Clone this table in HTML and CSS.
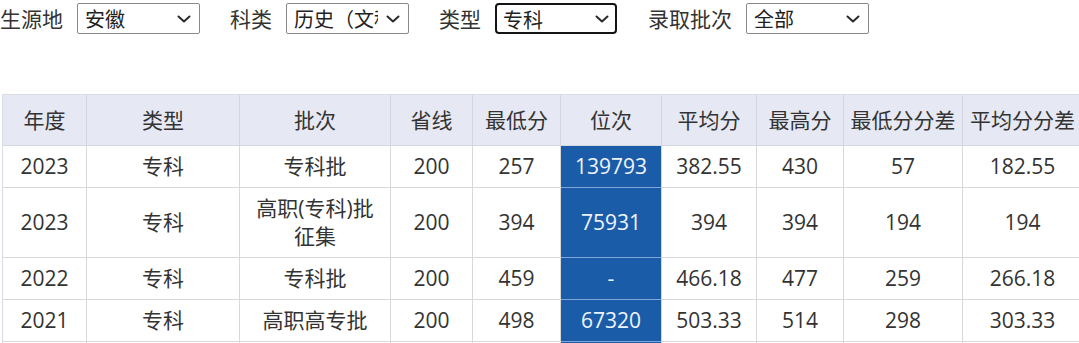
FILE: index.html
```html
<!DOCTYPE html>
<html lang="zh-CN">
<head>
<meta charset="utf-8">
<title>录取分数</title>
<link rel="stylesheet" href="styles.css">
</head>
<body>
<div class="page">
  <div class="filters">
    <div class="field">
      <span class="label">生源地</span>
      <div class="select-wrap">
        <select class="select"><option>安徽</option></select>
        <svg class="chev" width="14" height="8" viewBox="0 0 14 8"><path d="M1.5 1.5 L7 6.5 L12.5 1.5" fill="none" stroke="#2a2a2a" stroke-width="2" stroke-linecap="round" stroke-linejoin="round"/></svg>
      </div>
    </div>
    <div class="field">
      <span class="label">科类</span>
      <div class="select-wrap">
        <select class="select"><option>历史（文科）</option></select>
        <svg class="chev" width="14" height="8" viewBox="0 0 14 8"><path d="M1.5 1.5 L7 6.5 L12.5 1.5" fill="none" stroke="#2a2a2a" stroke-width="2" stroke-linecap="round" stroke-linejoin="round"/></svg>
      </div>
    </div>
    <div class="field">
      <span class="label">类型</span>
      <div class="select-wrap">
        <select class="select is-focused"><option>专科</option></select>
        <svg class="chev" width="14" height="8" viewBox="0 0 14 8"><path d="M1.5 1.5 L7 6.5 L12.5 1.5" fill="none" stroke="#2a2a2a" stroke-width="2" stroke-linecap="round" stroke-linejoin="round"/></svg>
      </div>
    </div>
    <div class="field">
      <span class="label">录取批次</span>
      <div class="select-wrap">
        <select class="select"><option>全部</option></select>
        <svg class="chev" width="14" height="8" viewBox="0 0 14 8"><path d="M1.5 1.5 L7 6.5 L12.5 1.5" fill="none" stroke="#2a2a2a" stroke-width="2" stroke-linecap="round" stroke-linejoin="round"/></svg>
      </div>
    </div>
  </div>

  <table class="scores">
    <colgroup>
      <col class="c-year"><col class="c-type"><col class="c-batch"><col class="c-line"><col class="c-min">
      <col class="c-rank"><col class="c-avg"><col class="c-max"><col class="c-mindiff"><col class="c-avgdiff">
    </colgroup>
    <thead>
      <tr>
        <th>年度</th><th>类型</th><th>批次</th><th>省线</th><th>最低分</th>
        <th>位次</th><th>平均分</th><th>最高分</th><th>最低分分差</th><th>平均分分差</th>
      </tr>
    </thead>
    <tbody>
      <tr>
        <td>2023</td><td>专科</td><td>专科批</td><td>200</td><td>257</td>
        <td class="rank">139793</td><td>382.55</td><td>430</td><td>57</td><td>182.55</td>
      </tr>
      <tr>
        <td>2023</td><td>专科</td><td>高职(专科)批<br>征集</td><td>200</td><td>394</td>
        <td class="rank">75931</td><td>394</td><td>394</td><td>194</td><td>194</td>
      </tr>
      <tr>
        <td>2022</td><td>专科</td><td>专科批</td><td>200</td><td>459</td>
        <td class="rank">-</td><td>466.18</td><td>477</td><td>259</td><td>266.18</td>
      </tr>
      <tr>
        <td>2021</td><td>专科</td><td>高职高专批</td><td>200</td><td>498</td>
        <td class="rank">67320</td><td>503.33</td><td>514</td><td>298</td><td>303.33</td>
      </tr>
      <tr>
        <td></td><td></td><td></td><td></td><td></td>
        <td class="rank"></td><td></td><td></td><td></td><td></td>
      </tr>
    </tbody>
  </table>
</div>
</body>
</html>
```

FILE: styles.css
```css
html, body {
  margin: 0;
  padding: 0;
  overflow: hidden;
  background: #fff;
}

.page {
  width: 1079px;
  height: 343px;
  overflow: hidden;
  font-family: "Open Sans", "Noto Sans CJK SC", sans-serif;
  color: #333;
}

.filters {
  display: flex;
  align-items: center;
  gap: 30px;
  padding-top: 3px;
  height: 31px;
}

.field {
  display: flex;
  align-items: center;
  gap: 14px;
}

.label {
  font-family: "Noto Sans CJK SC", sans-serif;
  font-size: 21px;
  line-height: 31px;
  color: #333;
}

.select-wrap {
  position: relative;
  width: 123px;
  height: 31px;
}

.select {
  appearance: none;
  -webkit-appearance: none;
  box-sizing: border-box;
  width: 123px;
  height: 31px;
  margin: 0;
  padding: 0 30px 0 7px;
  border: 1px solid #8a8a8a;
  border-radius: 2px;
  background: #fff;
  font-family: "Noto Sans CJK SC", sans-serif;
  font-size: 20px;
  line-height: 29px;
  color: #222;
}

.select.is-focused {
  border: 2px solid #141414;
  border-radius: 4px;
  padding-left: 6px;
  width: 122px;
}

.chev {
  position: absolute;
  right: 9px;
  top: 12px;
  pointer-events: none;
}

.scores {
  margin: 60px 0 0 2px;
  table-layout: fixed;
  width: 1080px;
  border-collapse: separate;
  border-spacing: 0;
  border-top: 1px solid #d9dce3;
  border-left: 1px solid #d9dce3;
  font-size: 21px;
  line-height: 28px;
}

.c-year { width: 84px; }
.c-type { width: 153px; }
.c-batch { width: 151px; }
.c-line { width: 82px; }
.c-min { width: 88px; }
.c-rank { width: 101px; }
.c-avg { width: 95px; }
.c-max { width: 87px; }
.c-mindiff { width: 119px; }
.c-avgdiff { width: 120px; }

.scores th {
  background: #e6e9f3;
  font-weight: normal;
  color: #333;
  padding: 11px 0;
  border-right: 1px solid #d3d7e0;
  border-bottom: 1px solid #d3d7e0;
  text-align: center;
  font-size: 21px;
}

.scores td {
  padding: 6px 0 7px;
  border-right: 1px solid #d8d8d8;
  border-bottom: 1px solid #d8d8d8;
  text-align: center;
  color: #333;
  height: 28px;
}

.scores td.rank {
  background: #1b5ca8;
  color: #eef4ff;
  border-bottom-color: #7fa6d9;
}
```
